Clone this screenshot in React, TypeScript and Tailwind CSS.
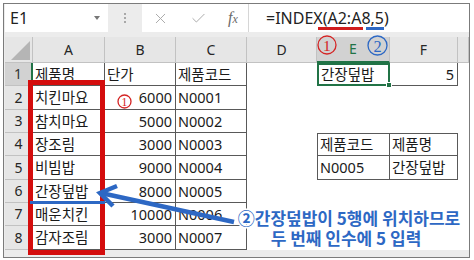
import { X, Check } from "lucide-react";

const data = [
  ["제품명", "단가", "제품코드"],
  ["치킨마요", "6000", "N0001"],
  ["참치마요", "5000", "N0002"],
  ["장조림", "3000", "N0003"],
  ["비빔밥", "9000", "N0004"],
  ["간장덮밥", "8000", "N0005"],
  ["매운치킨", "10000", "N0006"],
  ["감자조림", "3000", "N0007"],
];

const heads = ["A", "B", "C", "D", "E", "F", ""];

function Circled({ n, color, size }: { n: string; color: string; size: number }) {
  return (
    <svg width={size} height={size} viewBox={`0 0 ${size} ${size}`}>
      <circle cx={size / 2} cy={size / 2} r={size / 2 - 1} fill="none" stroke={color} strokeWidth={1.3} />
      <text
        x={size / 2}
        y={size / 2 + 0.5}
        textAnchor="middle"
        dominantBaseline="central"
        fontSize={size * 0.78}
        fill={color}
        fontFamily="'Liberation Serif', serif"
      >
        {n}
      </text>
    </svg>
  );
}

function HeaderRow() {
  return (
    <>
      <div className="relative bg-[#e6e6e6] border-r border-b border-[#c2c2c2]">
        <div className="absolute right-[2px] bottom-[2px] w-0 h-0 border-l-[19px] border-l-transparent border-b-[19px] border-b-[#b5b5b5]" />
      </div>
      {heads.map((h, i) =>
        h === "E" ? (
          <div
            key={i}
            className="flex items-center justify-center bg-[#d2d2d2] border-r border-[#c2c2c2] border-b-2 border-b-[#217346] text-[14px] text-[#217346]"
          >
            {h}
          </div>
        ) : (
          <div
            key={i}
            className="flex items-center justify-center bg-[#e6e6e6] border-r border-b border-[#c2c2c2] text-[14px] text-[#262626]"
          >
            {h}
          </div>
        )
      )}
    </>
  );
}

const tb = "border-[#595959]";

export default function App() {
  return (
    <div className="relative w-[474px] h-[260px] bg-white pl-[3px] pt-[3px] overflow-hidden font-['Noto_Sans','Noto_Sans_CJK_KR',sans-serif]">
      <div className="w-[467px] h-[255px] border border-[#7b7b7b] bg-[#ececec] flex flex-col overflow-hidden">
        {/* formula bar */}
        <div className="flex h-[28px] ml-px shrink-0">
          <div className="w-[103px] bg-white flex items-center justify-between pl-[5px] pr-[8px] text-[16px] text-[#222]">
            <span>E1</span>
            <span className="w-0 h-0 border-l-[3px] border-r-[3px] border-t-[4px] border-l-transparent border-r-transparent border-t-[#777]" />
          </div>
          <div className="w-[34px] flex flex-col items-center justify-center gap-[2px]">
            <span className="w-[2px] h-[2px] bg-[#a8a8a8]" />
            <span className="w-[2px] h-[2px] bg-[#a8a8a8]" />
            <span className="w-[2px] h-[2px] bg-[#a8a8a8]" />
          </div>
          <div className="w-[106px] bg-white flex items-center pl-[10px] gap-[21px] text-[#ababab]">
            <X size={17} strokeWidth={1.4} />
            <Check size={17} strokeWidth={1.4} />
            <span className="font-['Liberation_Serif',serif] italic text-[16px] text-[#6a6a6a] leading-none">
              f<span className="text-[12px]">x</span>
            </span>
          </div>
          <div className="flex-1 bg-white border-l border-[#d6d6d6] pl-[17px] flex items-center text-[16px] text-[#222]">
            =INDEX(A2:A8,5)
          </div>
        </div>
        <div className="h-[5px] shrink-0" />
        {/* sheet */}
        <div className="ml-px bg-white grid grid-cols-[28px_72px_71px_71px_70px_73px_68px_1fr] grid-rows-[26px_23px_24px_23px_23px_24px_23px_23px_24px] text-[14.5px] text-[#1a1a1a] leading-none">
          <HeaderRow />
          {data.map((r, i) => (
            <Row key={i} i={i} r={r} />
          ))}
        </div>
      </div>

      {/* annotations */}
      <div className="absolute left-[318px] top-[27px] w-[45px] h-[3px] bg-[#d01c1c]" />
      <div className="absolute left-[366px] top-[27px] w-[18px] h-[3px] bg-[#2d68c4]" />
      <div className="absolute left-[317px] top-[35px]">
        <Circled n="1" color="#d42424" size={20} />
      </div>
      <div className="absolute left-[367px] top-[35px]">
        <Circled n="2" color="#2d68c4" size={21} />
      </div>
      <div className="absolute left-[117px] top-[94px]">
        <Circled n="1" color="#d42424" size={15} />
      </div>
      <div className="absolute left-[28px] top-[80px] w-[77px] h-[175px] border-[5px] border-[#d40d0d]" />
      <div className="absolute left-[30px] top-[201px] w-[75px] h-[3px] bg-[#2d68c4]" />
      <svg className="absolute left-0 top-0 pointer-events-none" width={474} height={260}>
        <line x1={234} y1={222} x2={101} y2={193} stroke="#2d68c4" strokeWidth={4.5} />
        <polyline points="117,186 100,193 113,206" fill="none" stroke="#2d68c4" strokeWidth={4.5} strokeLinejoin="miter" />
      </svg>
      <div className="absolute left-[224px] top-[208px] w-[250px] text-center font-['Noto_Sans_CJK_KR',sans-serif] font-bold text-[17px] leading-[20px] text-[#2d68c4] [-webkit-text-stroke:3px_white] [paint-order:stroke_fill]">
        <div>②간장덮밥이 5행에 위치하므로</div>
        <div className="pr-[6px]">두 번째 인수에 5 입력</div>
      </div>
    </div>
  );
}

function Row({ i, r }: { i: number; r: string[] }) {
  const first = i === 0;
  return (
    <>
      {first ? (
        <div className="flex items-center justify-center bg-[#d2d2d2] border-b border-[#c2c2c2] border-r-2 border-r-[#217346] text-[14px] text-[#333]">
          1
        </div>
      ) : (
        <div className="flex items-center justify-center bg-[#e6e6e6] border-r border-b border-[#c2c2c2] text-[14px] text-[#262626]">
          {i + 1}
        </div>
      )}
      <div className={`flex items-center pl-[2px] border-r border-b ${tb}`}>{r[0]}</div>
      <div className={`flex items-center border-r border-b ${tb} ${first ? "pl-[2px]" : "justify-end pr-[3px]"}`}>{r[1]}</div>
      <div className={`flex items-center pl-[2px] border-r border-b ${tb}`}>{r[2]}</div>
      <div />
      {i === 0 ? (
        <div className="relative flex items-center pl-[2px] border-2 border-[#217346]">
          간장덮밥
          <span className="absolute -right-[4px] -bottom-[4px] w-[6px] h-[6px] bg-[#217346] border border-white" />
        </div>
      ) : i === 3 ? (
        <div className={`flex items-center pl-[2px] border ${tb}`}>제품코드</div>
      ) : i === 4 ? (
        <div className={`flex items-center pl-[2px] border-l border-r border-b ${tb}`}>N0005</div>
      ) : (
        <div />
      )}
      {i === 0 ? (
        <div className={`flex items-center justify-end pr-[3px] border-r border-b ${tb}`}>5</div>
      ) : i === 3 ? (
        <div className={`flex items-center pl-[2px] border-t border-r border-b ${tb}`}>제품명</div>
      ) : i === 4 ? (
        <div className={`flex items-center pl-[2px] border-r border-b ${tb}`}>간장덮밥</div>
      ) : (
        <div />
      )}
      <div />
    </>
  );
}
